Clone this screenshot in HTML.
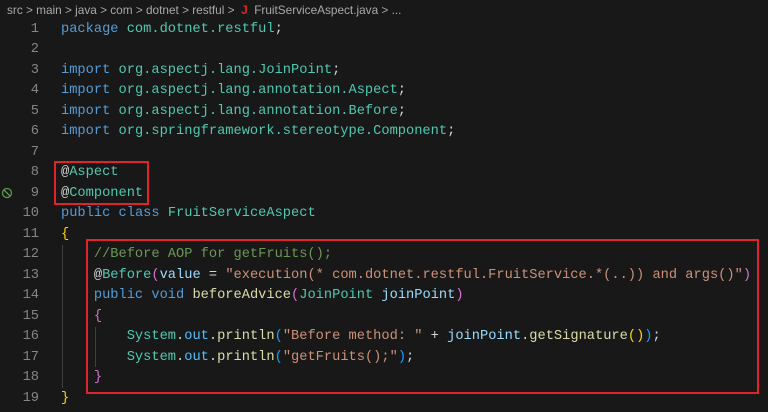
<!DOCTYPE html>
<html><head><style>
body{margin:0;width:768px;height:412px;background:#181818;overflow:hidden;position:relative;font-family:"Liberation Mono",monospace;}
.bc{position:absolute;left:7px;top:2px;font:11.8px "Liberation Sans",sans-serif;color:#a9a9a9;white-space:pre;line-height:16px}
.l{position:absolute;left:0;height:20px;line-height:20px;font-size:13.7px;white-space:pre;color:#d4d4d4;margin-top:1.5px}
.n{position:absolute;left:0;width:39px;text-align:right;color:#858585}
.c{position:absolute;left:61px}
.k{color:#569cd6}.t{color:#4ec9b0}.f{color:#dcdcaa}.s{color:#ce9178}.v{color:#9cdcfe}.cm{color:#6a9955}.y{color:#ffd700}.p{color:#da70d6}.b{color:#179fff}
.box{position:absolute;border:2px solid #e0252a}
.g{position:absolute;width:1px;background:#404040}
</style></head><body>
<div class="bc">src &gt; main &gt; java &gt; com &gt; dotnet &gt; restful &gt;  <span style="color:#e0252a;font-weight:bold">J</span>  FruitServiceAspect.java &gt; ...</div>
<div class="l" style="top:18px"><span class="n">1</span><span class="c"><span class="k">package</span> <span class="t">com.dotnet.restful</span>;</span></div>
<div class="l" style="top:38.5px"><span class="n">2</span></div>
<div class="l" style="top:59px"><span class="n">3</span><span class="c"><span class="k">import</span> <span class="t">org.aspectj.lang.JoinPoint</span>;</span></div>
<div class="l" style="top:79.5px"><span class="n">4</span><span class="c"><span class="k">import</span> <span class="t">org.aspectj.lang.annotation.Aspect</span>;</span></div>
<div class="l" style="top:100px"><span class="n">5</span><span class="c"><span class="k">import</span> <span class="t">org.aspectj.lang.annotation.Before</span>;</span></div>
<div class="l" style="top:120.5px"><span class="n">6</span><span class="c"><span class="k">import</span> <span class="t">org.springframework.stereotype.Component</span>;</span></div>
<div class="l" style="top:141px"><span class="n">7</span></div>
<div class="l" style="top:161.5px"><span class="n">8</span><span class="c">@<span class="t">Aspect</span></span></div>
<div class="l" style="top:182px"><span class="n">9</span><span class="c">@<span class="t">Component</span></span></div>
<svg style="position:absolute;left:1px;top:187px" width="12" height="12"><circle cx="6" cy="6" r="4.5" fill="none" stroke="#5a9a4a" stroke-width="1.3"/><line x1="3" y1="3" x2="9" y2="9" stroke="#5a9a4a" stroke-width="1.3"/></svg>
<div class="l" style="top:202.5px"><span class="n">10</span><span class="c"><span class="k">public</span> <span class="k">class</span> <span class="t">FruitServiceAspect</span></span></div>
<div class="l" style="top:223px"><span class="n">11</span><span class="c"><span class="y">{</span></span></div>
<div class="l" style="top:243.5px"><span class="n">12</span><span class="c">    <span class="cm">//Before AOP for getFruits();</span></span></div>
<div class="l" style="top:264px"><span class="n">13</span><span class="c">    @<span class="t">Before</span><span class="p">(</span><span class="v">value</span> = <span class="s">"execution(* com.dotnet.restful.FruitService.*(..)) and args()"</span><span class="p">)</span></span></div>
<div class="l" style="top:284.5px"><span class="n">14</span><span class="c">    <span class="k">public</span> <span class="k">void</span> <span class="f">beforeAdvice</span><span class="p">(</span><span class="t">JoinPoint</span> <span class="v">joinPoint</span><span class="p">)</span></span></div>
<div class="l" style="top:305px"><span class="n">15</span><span class="c">    <span class="p">{</span></span></div>
<div class="l" style="top:325.5px"><span class="n">16</span><span class="c">        <span class="t">System</span>.<span class="v" style="color:#4fc1ff">out</span>.<span class="f">println</span><span class="b">(</span><span class="s">"Before method: "</span> + <span class="v">joinPoint</span>.<span class="f">getSignature</span><span class="y">()</span><span class="b">)</span>;</span></div>
<div class="l" style="top:346px"><span class="n">17</span><span class="c">        <span class="t">System</span>.<span class="v" style="color:#4fc1ff">out</span>.<span class="f">println</span><span class="b">(</span><span class="s">"getFruits();"</span><span class="b">)</span>;</span></div>
<div class="l" style="top:366.5px"><span class="n">18</span><span class="c">    <span class="p">}</span></span></div>
<div class="l" style="top:387px"><span class="n">19</span><span class="c"><span class="y">}</span></span></div>
<div class="g" style="left:62px;top:245px;height:143px"></div>
<div class="g" style="left:95px;top:327px;height:40px"></div>
<div class="box" style="left:54px;top:161px;width:91px;height:40px"></div>
<div class="box" style="left:86px;top:239px;width:669px;height:151px"></div>
</body></html>
